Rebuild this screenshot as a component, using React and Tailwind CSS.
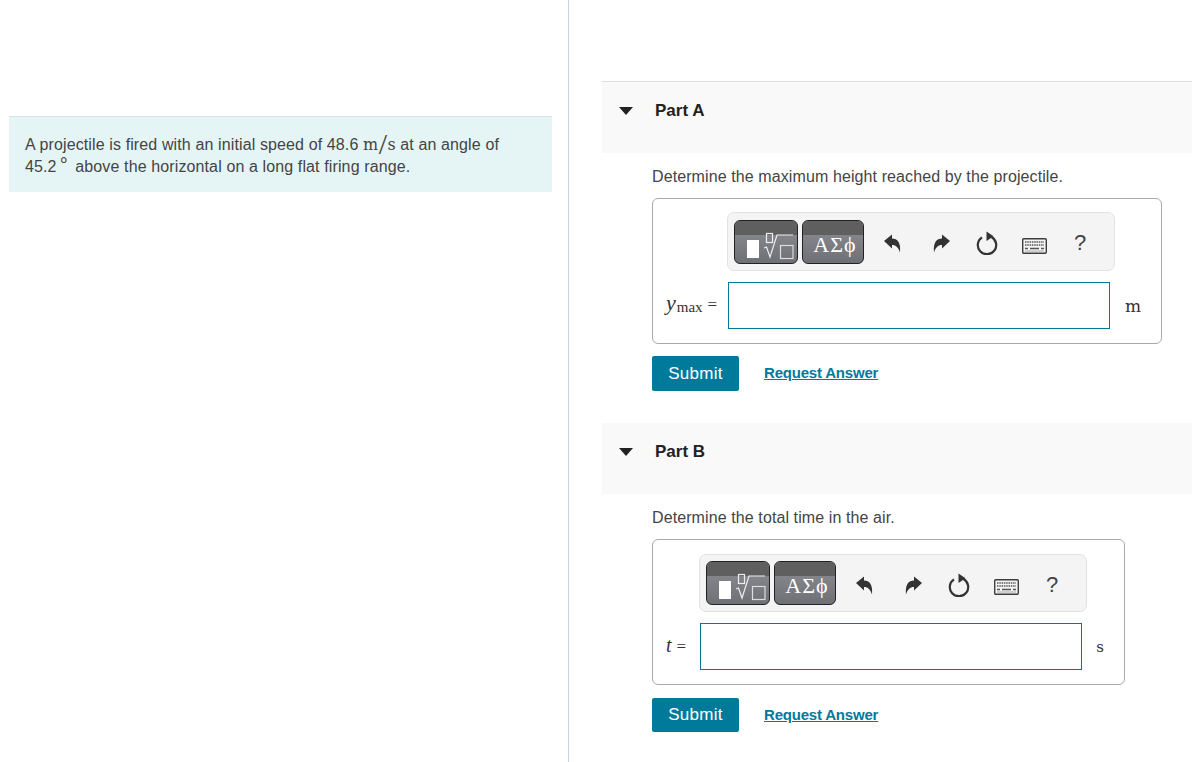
import React from "react";

const sans = "font-['Liberation_Sans',Arial,sans-serif]";
const serif = "font-['Liberation_Serif','DejaVu_Serif',serif]";
const mathUnit = "font-['DejaVu_Serif',serif]";

const TemplatesIcon = () => (
  <svg width="62" height="42" viewBox="0 0 62 42" className="absolute left-0 top-0">
    <rect x="12" y="19" width="12" height="18" fill="#fff" />
    <rect x="31.500" y="12.500" width="6" height="9" fill="none" stroke="#eee" strokeWidth="1.200" />
    <path d="M29 27l2.500-1 3.500 10 7-22h16" fill="none" stroke="#eee" strokeWidth="1.200" />
    <rect x="45.500" y="24.500" width="12.500" height="13" fill="none" stroke="#ddd" strokeWidth="1.200" />
  </svg>
);

const KeyboardIcon = () => (
  <svg width="25" height="16" viewBox="0 0 25 16">
    <rect x="0.700" y="0.700" width="23.600" height="14.600" rx="1" fill="#f4f4f4" stroke="#3d3d3d" strokeWidth="1.400" />
    <path d="M3 4h19M3 7h19" stroke="#555" strokeWidth="1.500" strokeDasharray="1.500 .8" />
    <path d="M3 10.500h3M8 10.500h9M19 10.500h3" stroke="#555" strokeWidth="1.500" />
    <path d="M3 13h19" stroke="#aaa" strokeWidth="1" />
  </svg>
);

const Toolbar = ({ height }) => (
  <div
    className="flex w-[388px] items-center rounded-[7px] border border-[#e2e2e2] bg-[#f4f4f4] pl-[6px]"
    style={{ height }}
  >
    <div className="relative h-[44px] w-[64px] overflow-hidden rounded-[6px] border border-[#222] bg-gradient-to-b from-[#8f8f96] to-[#6f6f76]">
      <div className="h-[14px] bg-[#5f5f5f]"></div>
      <TemplatesIcon />
    </div>
    <div className="relative ml-[4px] h-[44px] w-[62px] overflow-hidden rounded-[6px] border border-[#222] bg-gradient-to-b from-[#8f8f96] to-[#6f6f76]">
      <div className="h-[14px] bg-[#5f5f5f]"></div>
      <span className={`absolute inset-x-0 top-[12px] pl-[4px] text-center text-[22px] leading-[24px] tracking-[1px] text-white ${serif}`}>ΑΣϕ</span>
    </div>
    <svg width="20" height="20" viewBox="0 0 20 20" className="mt-[3px] ml-[19px]">
      <path d="M1 8l8-6.500v4c5.500 0 9 4 8 14-1.500-5-4-7.500-8-7.500v3.500z" fill="#333" />
    </svg>
    <svg width="20" height="20" viewBox="0 0 20 20" className="mt-[3px] ml-[28px]">
      <path d="M19 8l-8-6.500v4c-5.500 0-9 4-8 14 1.500-5 4-7.500 8-7.500v3.500z" fill="#333" />
    </svg>
    <svg width="22" height="24" viewBox="0 0 22 24" className="mt-[3px] ml-[25px]">
      <path d="M15.500 6a9.200 9.200 0 1 1-9.500.3" fill="none" stroke="#333" strokeWidth="2.200" />
      <path d="M10.500 0.500l7 4.800-7 4.700z" fill="#333" />
    </svg>
    <div className="mt-[8px] ml-[24px] flex">
      <KeyboardIcon />
    </div>
    <span className={`mt-[3px] ml-[27px] text-[22px] leading-none text-[#444] ${sans}`}>?</span>
  </div>
);

const AnswerBox = ({ label, unit, unitClass, width, labelWidth, unitWidth, toolbarTop, toolbarHeight }) => (
  <div
    className="flex h-[146px] flex-col rounded-[6px] border border-[#aaa]"
    style={{ width, paddingTop: toolbarTop }}
  >
    <div style={{ marginLeft: labelWidth - 1 }}>
      <Toolbar height={toolbarHeight} />
    </div>
    <div className="mt-[11px] flex items-center">
      <div className="shrink-0" style={{ width: labelWidth }}>
        {label}
      </div>
      <div className="h-[47px] w-[382px] shrink-0 border border-[#007a9b] bg-white"></div>
      <div className={`pt-[2px] text-center text-[#333] ${unitClass} ${mathUnit}`} style={{ width: unitWidth }}>
        {unit}
      </div>
    </div>
  </div>
);

const Part = ({ name, prompt, topBorder, headerClass, submitClass, children }) => (
  <section>
    <div className={`flex items-center bg-[#f9f9f9] pb-[13px] ${headerClass} ${topBorder ? "border-t border-[#e0e0e0]" : ""}`}>
      <span className="ml-[17px] h-0 w-0 border-x-[7px] border-t-[8px] border-x-transparent border-t-[#222]"></span>
      <h2 className={`ml-[22px] text-[17px] leading-[24px] font-bold text-[#222] ${sans}`}>{name}</h2>
    </div>
    <div className="pl-[50px]">
      <p className={`pt-[14px] text-[16px] leading-[20px] tracking-[0.1px] text-[#444] ${sans}`}>{prompt}</p>
      <div className="mt-[11px]">{children}</div>
      <div className={`flex items-center ${submitClass}`}>
        <button className={`h-full w-[87px] rounded-[2px] bg-[#007a9b] text-[17px] tracking-[0.27px] text-white ${sans}`}>Submit</button>
        <a className={`ml-[25px] text-[15px] font-bold tracking-[-0.2px] text-[#007a9b] underline ${sans}`}>Request Answer</a>
      </div>
    </div>
  </section>
);

export default function App() {
  return (
    <div className="flex h-[762px] w-[1192px] overflow-hidden bg-white">
      <div className="h-full w-[569px] shrink-0 border-r border-[#c5d5e0] pt-[116px] pl-[9px]">
        <div className={`h-[76px] w-[543px] border-t border-[#d6e2e4] bg-[#e5f5f6] pt-[17px] pl-[16px] text-[16px] leading-[22px] tracking-[0.12px] text-[#444] ${sans}`}>
          <p>
            A projectile is fired with an initial speed of 48.6{" "}
            <span className={`${mathUnit} text-[16px] tracking-normal`}>
              m<span className={`px-[0.500px] align-[-4px] text-[30px] font-light leading-[0] ${serif}`}>/</span>s
            </span>{" "}
            at an angle of
          </p>
          <p>
            45.2<span className="mr-[3px] ml-[3px] text-[20px] leading-[0]">°</span> above the horizontal on a long flat firing range.
          </p>
        </div>
      </div>
      <div className="ml-[33px] flex-1 pt-[81px]">
        <Part name="Part A" prompt="Determine the maximum height reached by the projectile." topBorder headerClass="h-[72px]" submitClass="mt-[12px] h-[35px]">
          <AnswerBox
            width={510}
            labelWidth={75}
            unitWidth={46}
            unitClass="text-[17px]"
            toolbarTop={13}
            toolbarHeight={59}
            unit="m"
            label={
              <span className={`ml-[13px] text-[17px] text-[#333] ${serif}`}>
                <i className="text-[22px] leading-[0] tracking-[1px]">y</i>
                <span className="align-[-2px] text-[15px]">max</span>
                <span className="ml-[5px]">=</span>
              </span>
            }
          />
        </Part>
        <div className="mt-[32px]">
          <Part name="Part B" prompt="Determine the total time in the air." headerClass="h-[71px]" submitClass="mt-[13px] h-[34px]">
            <AnswerBox
              width={473}
              labelWidth={47}
              unitWidth={36}
              unitClass="text-[15px]"
              toolbarTop={14}
              toolbarHeight={58}
              unit="s"
              label={
                <span className={`ml-[13px] text-[17px] text-[#333] ${serif}`}>
                  <i className="text-[20px] leading-[0]">t</i>
                  <span className="ml-[5px]">=</span>
                </span>
              }
            />
          </Part>
        </div>
      </div>
    </div>
  );
}
